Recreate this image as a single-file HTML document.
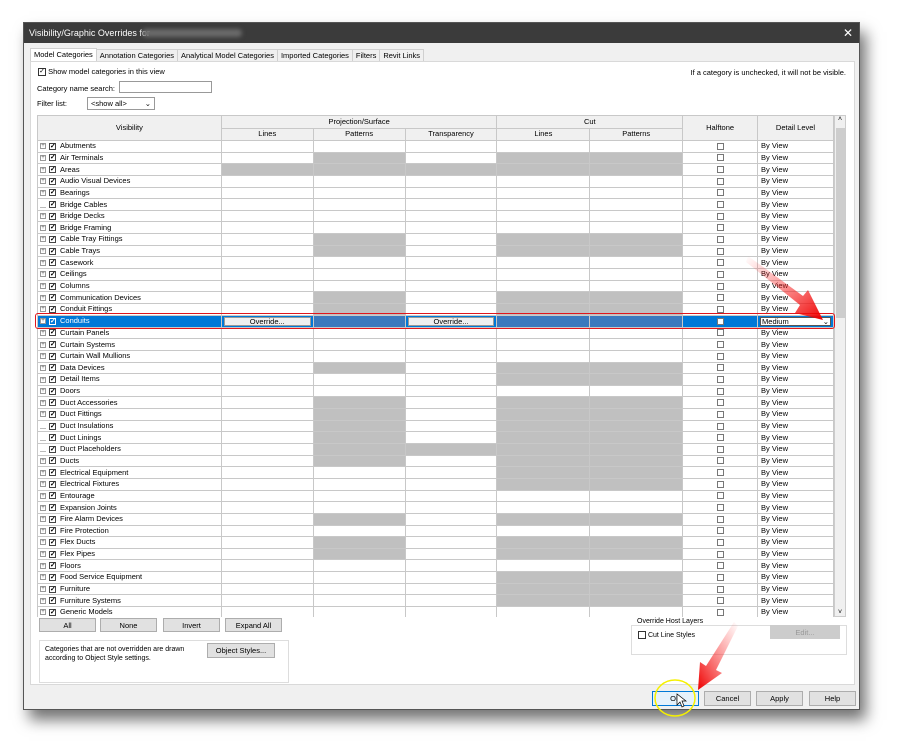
<!DOCTYPE html>
<html><head><meta charset="utf-8"><style>
*{box-sizing:border-box;margin:0;padding:0}
body{width:903px;height:754px;background:#fff;position:relative;overflow:hidden;font-family:"Liberation Sans",sans-serif;font-size:8px;color:#000}
.dlg{position:absolute;left:23px;top:22px;width:837px;height:688px;background:#f0f0f0;border:1px solid #555;box-shadow:6px 10px 14px rgba(0,0,0,.55)}
.title{position:absolute;left:0;top:0;width:100%;height:20px;background:#3b3b3b;color:#fff;font-size:9px;line-height:20px;padding-left:5px}
.blur{position:absolute;left:118px;top:6px;width:100px;height:8px;background:#6a6a6a;border-radius:4px;filter:blur(2px)}
.x{position:absolute;right:6px;top:0;color:#fff;font-size:12px;line-height:20px}
.abs{position:absolute}
.tabs{position:absolute;left:6px;top:26px;height:12px;display:flex}
.tab{border:1px solid #d0d0d0;border-bottom:none;padding:0 3px;font-size:7.5px;line-height:11px;background:#f0f0f0;margin-right:-1px}
.tab.on{background:#fff;height:13px;margin-top:-1px}
.panel{position:absolute;left:6px;top:38px;width:825px;height:624px;background:#fff;border:1px solid #d9d9d9}
.cb{display:inline-block;width:8px;height:8px;border:1px solid #333;background:#fff;vertical-align:middle;font-size:7px;line-height:6px;text-align:center}
.btn{position:absolute;background:#e1e1e1;border:1px solid #adadad;text-align:center;font-size:7.5px;line-height:13px}
table{border-collapse:collapse;table-layout:fixed;position:absolute;left:0;top:0}
td,th{border:1px solid #c8c8c8;height:11.65px;padding:0;font-weight:normal;font-size:7.5px;white-space:nowrap;overflow:hidden;line-height:10px}
th{background:#f0f0f0;text-align:center}
td.g{background:#c0c0c0}
td.v{padding-left:2px}
i.p{display:inline-block;width:6px;height:6px;border:1px solid #999;font-style:normal;font-size:6px;line-height:4px;text-align:center;color:#666;vertical-align:middle;margin-right:3px}
i.n{display:inline-block;width:6px;height:6px;margin-right:3px;border-bottom:1px solid #bbb;vertical-align:middle}
b.k{display:inline-block;width:7px;height:7px;border:1px solid #444;font-size:7px;line-height:5px;text-align:center;vertical-align:middle;margin-right:4px;font-weight:bold}
td.h{text-align:center}
s{display:inline-block;width:7px;height:7px;border:1px solid #777;vertical-align:middle;background:#fff}
td.d{padding-left:3px}
tr.sel td{background:#0078d7;color:#fff}
tr.sel td.db{background:#3a79bd}
.ov{display:block;margin:1px 2px;height:9px;background:#f0f0f0;border:1px solid #999;color:#000;text-align:center;line-height:7px}
</style></head><body>
<div class="dlg">
<div class="title">Visibility/Graphic Overrides for <span class="blur"></span><span class="x">✕</span></div>
<div class="tabs"><div class="tab on">Model Categories</div><div class="tab">Annotation Categories</div><div class="tab">Analytical Model Categories</div><div class="tab">Imported Categories</div><div class="tab">Filters</div><div class="tab">Revit Links</div></div>
<div class="panel">
<div class="abs" style="left:7px;top:5px;font-size:7.5px"><span class="cb">✓</span> Show model categories in this view</div>
<div class="abs" style="right:8px;top:6px;font-size:7.5px">If a category is unchecked, it will not be visible.</div>
<div class="abs" style="left:6px;top:22px;font-size:7.5px">Category name search:</div>
<div class="abs" style="left:88px;top:19px;width:93px;height:12px;border:1px solid #999;background:#fff"></div>
<div class="abs" style="left:6px;top:37px;font-size:7.5px">Filter list:</div>
<div class="abs" style="left:56px;top:35px;width:68px;height:13px;border:1px solid #999;background:#fff;font-size:7.5px;line-height:11px;padding-left:3px">&lt;show all&gt;<span style="position:absolute;right:3px">⌄</span></div>
<div class="abs" style="left:803px;top:53px;width:12px;height:502px;background:#f0f0f0;border:1px solid #ccc"><div style="position:absolute;left:1px;top:12px;width:9px;height:190px;background:#cdcdcd"></div><div style="position:absolute;top:0;width:100%;text-align:center;font-size:7px">˄</div><div style="position:absolute;bottom:0;width:100%;text-align:center;font-size:7px">˅</div></div>
<div class="abs" style="left:6px;top:53px;width:797px;height:502px;overflow:hidden">
<table>
<colgroup><col style="width:184px"><col style="width:92px"><col style="width:92px"><col style="width:92px"><col style="width:93px"><col style="width:93px"><col style="width:75px"><col style="width:76px"></colgroup>
<tr><th rowspan="2" style="height:25px">Visibility</th><th colspan="3">Projection/Surface</th><th colspan="2">Cut</th><th rowspan="2">Halftone</th><th rowspan="2">Detail Level</th></tr>
<tr><th>Lines</th><th>Patterns</th><th>Transparency</th><th>Lines</th><th>Patterns</th></tr>
<tr><td class="v"><i class="p">+</i><b class="k">✓</b>Abutments</td><td></td><td></td><td></td><td></td><td></td><td class="h"><s></s></td><td class="d">By View</td></tr>
<tr><td class="v"><i class="p">+</i><b class="k">✓</b>Air Terminals</td><td></td><td class="g"></td><td></td><td class="g"></td><td class="g"></td><td class="h"><s></s></td><td class="d">By View</td></tr>
<tr><td class="v"><i class="p">+</i><b class="k">✓</b>Areas</td><td class="g"></td><td class="g"></td><td class="g"></td><td class="g"></td><td class="g"></td><td class="h"><s></s></td><td class="d">By View</td></tr>
<tr><td class="v"><i class="p">+</i><b class="k">✓</b>Audio Visual Devices</td><td></td><td></td><td></td><td></td><td></td><td class="h"><s></s></td><td class="d">By View</td></tr>
<tr><td class="v"><i class="p">+</i><b class="k">✓</b>Bearings</td><td></td><td></td><td></td><td></td><td></td><td class="h"><s></s></td><td class="d">By View</td></tr>
<tr><td class="v"><i class="n"></i><b class="k">✓</b>Bridge Cables</td><td></td><td></td><td></td><td></td><td></td><td class="h"><s></s></td><td class="d">By View</td></tr>
<tr><td class="v"><i class="p">+</i><b class="k">✓</b>Bridge Decks</td><td></td><td></td><td></td><td></td><td></td><td class="h"><s></s></td><td class="d">By View</td></tr>
<tr><td class="v"><i class="p">+</i><b class="k">✓</b>Bridge Framing</td><td></td><td></td><td></td><td></td><td></td><td class="h"><s></s></td><td class="d">By View</td></tr>
<tr><td class="v"><i class="p">+</i><b class="k">✓</b>Cable Tray Fittings</td><td></td><td class="g"></td><td></td><td class="g"></td><td class="g"></td><td class="h"><s></s></td><td class="d">By View</td></tr>
<tr><td class="v"><i class="p">+</i><b class="k">✓</b>Cable Trays</td><td></td><td class="g"></td><td></td><td class="g"></td><td class="g"></td><td class="h"><s></s></td><td class="d">By View</td></tr>
<tr><td class="v"><i class="p">+</i><b class="k">✓</b>Casework</td><td></td><td></td><td></td><td></td><td></td><td class="h"><s></s></td><td class="d">By View</td></tr>
<tr><td class="v"><i class="p">+</i><b class="k">✓</b>Ceilings</td><td></td><td></td><td></td><td></td><td></td><td class="h"><s></s></td><td class="d">By View</td></tr>
<tr><td class="v"><i class="p">+</i><b class="k">✓</b>Columns</td><td></td><td></td><td></td><td></td><td></td><td class="h"><s></s></td><td class="d">By View</td></tr>
<tr><td class="v"><i class="p">+</i><b class="k">✓</b>Communication Devices</td><td></td><td class="g"></td><td></td><td class="g"></td><td class="g"></td><td class="h"><s></s></td><td class="d">By View</td></tr>
<tr><td class="v"><i class="p">+</i><b class="k">✓</b>Conduit Fittings</td><td></td><td class="g"></td><td></td><td class="g"></td><td class="g"></td><td class="h"><s></s></td><td class="d">By View</td></tr>
<tr class="sel"><td class="v"><i class="p" style="background:#fff">+</i><b class="k" style="border-color:#fff">✓</b>Conduits</td><td><span class="ov">Override...</span></td><td class="db"></td><td><span class="ov">Override...</span></td><td class="db"></td><td class="db"></td><td class="h"><s></s></td><td style="padding:1px 2px"><span style="display:block;background:#fff;color:#000;border:1px solid #555;height:9px;line-height:7px;padding-left:1px;position:relative">Medium<span style="position:absolute;right:1px;top:0">⌄</span></span></td></tr>
<tr><td class="v"><i class="p">+</i><b class="k">✓</b>Curtain Panels</td><td></td><td></td><td></td><td></td><td></td><td class="h"><s></s></td><td class="d">By View</td></tr>
<tr><td class="v"><i class="p">+</i><b class="k">✓</b>Curtain Systems</td><td></td><td></td><td></td><td></td><td></td><td class="h"><s></s></td><td class="d">By View</td></tr>
<tr><td class="v"><i class="p">+</i><b class="k">✓</b>Curtain Wall Mullions</td><td></td><td></td><td></td><td></td><td></td><td class="h"><s></s></td><td class="d">By View</td></tr>
<tr><td class="v"><i class="p">+</i><b class="k">✓</b>Data Devices</td><td></td><td class="g"></td><td></td><td class="g"></td><td class="g"></td><td class="h"><s></s></td><td class="d">By View</td></tr>
<tr><td class="v"><i class="p">+</i><b class="k">✓</b>Detail Items</td><td></td><td></td><td></td><td class="g"></td><td class="g"></td><td class="h"><s></s></td><td class="d">By View</td></tr>
<tr><td class="v"><i class="p">+</i><b class="k">✓</b>Doors</td><td></td><td></td><td></td><td></td><td></td><td class="h"><s></s></td><td class="d">By View</td></tr>
<tr><td class="v"><i class="p">+</i><b class="k">✓</b>Duct Accessories</td><td></td><td class="g"></td><td></td><td class="g"></td><td class="g"></td><td class="h"><s></s></td><td class="d">By View</td></tr>
<tr><td class="v"><i class="p">+</i><b class="k">✓</b>Duct Fittings</td><td></td><td class="g"></td><td></td><td class="g"></td><td class="g"></td><td class="h"><s></s></td><td class="d">By View</td></tr>
<tr><td class="v"><i class="n"></i><b class="k">✓</b>Duct Insulations</td><td></td><td class="g"></td><td></td><td class="g"></td><td class="g"></td><td class="h"><s></s></td><td class="d">By View</td></tr>
<tr><td class="v"><i class="n"></i><b class="k">✓</b>Duct Linings</td><td></td><td class="g"></td><td></td><td class="g"></td><td class="g"></td><td class="h"><s></s></td><td class="d">By View</td></tr>
<tr><td class="v"><i class="n"></i><b class="k">✓</b>Duct Placeholders</td><td></td><td class="g"></td><td class="g"></td><td class="g"></td><td class="g"></td><td class="h"><s></s></td><td class="d">By View</td></tr>
<tr><td class="v"><i class="p">+</i><b class="k">✓</b>Ducts</td><td></td><td class="g"></td><td></td><td class="g"></td><td class="g"></td><td class="h"><s></s></td><td class="d">By View</td></tr>
<tr><td class="v"><i class="p">+</i><b class="k">✓</b>Electrical Equipment</td><td></td><td></td><td></td><td class="g"></td><td class="g"></td><td class="h"><s></s></td><td class="d">By View</td></tr>
<tr><td class="v"><i class="p">+</i><b class="k">✓</b>Electrical Fixtures</td><td></td><td></td><td></td><td class="g"></td><td class="g"></td><td class="h"><s></s></td><td class="d">By View</td></tr>
<tr><td class="v"><i class="p">+</i><b class="k">✓</b>Entourage</td><td></td><td></td><td></td><td></td><td></td><td class="h"><s></s></td><td class="d">By View</td></tr>
<tr><td class="v"><i class="p">+</i><b class="k">✓</b>Expansion Joints</td><td></td><td></td><td></td><td></td><td></td><td class="h"><s></s></td><td class="d">By View</td></tr>
<tr><td class="v"><i class="p">+</i><b class="k">✓</b>Fire Alarm Devices</td><td></td><td class="g"></td><td></td><td class="g"></td><td class="g"></td><td class="h"><s></s></td><td class="d">By View</td></tr>
<tr><td class="v"><i class="p">+</i><b class="k">✓</b>Fire Protection</td><td></td><td></td><td></td><td></td><td></td><td class="h"><s></s></td><td class="d">By View</td></tr>
<tr><td class="v"><i class="p">+</i><b class="k">✓</b>Flex Ducts</td><td></td><td class="g"></td><td></td><td class="g"></td><td class="g"></td><td class="h"><s></s></td><td class="d">By View</td></tr>
<tr><td class="v"><i class="p">+</i><b class="k">✓</b>Flex Pipes</td><td></td><td class="g"></td><td></td><td class="g"></td><td class="g"></td><td class="h"><s></s></td><td class="d">By View</td></tr>
<tr><td class="v"><i class="p">+</i><b class="k">✓</b>Floors</td><td></td><td></td><td></td><td></td><td></td><td class="h"><s></s></td><td class="d">By View</td></tr>
<tr><td class="v"><i class="p">+</i><b class="k">✓</b>Food Service Equipment</td><td></td><td></td><td></td><td class="g"></td><td class="g"></td><td class="h"><s></s></td><td class="d">By View</td></tr>
<tr><td class="v"><i class="p">+</i><b class="k">✓</b>Furniture</td><td></td><td></td><td></td><td class="g"></td><td class="g"></td><td class="h"><s></s></td><td class="d">By View</td></tr>
<tr><td class="v"><i class="p">+</i><b class="k">✓</b>Furniture Systems</td><td></td><td></td><td></td><td class="g"></td><td class="g"></td><td class="h"><s></s></td><td class="d">By View</td></tr>
<tr><td class="v"><i class="p">+</i><b class="k">✓</b>Generic Models</td><td></td><td></td><td></td><td></td><td></td><td class="h"><s></s></td><td class="d">By View</td></tr>
</table>
</div>
<div class="btn" style="left:8px;top:556px;width:57px;height:14px">All</div>
<div class="btn" style="left:69px;top:556px;width:57px;height:14px">None</div>
<div class="btn" style="left:132px;top:556px;width:57px;height:14px">Invert</div>
<div class="btn" style="left:194px;top:556px;width:57px;height:14px">Expand All</div>
<div class="abs" style="left:8px;top:578px;width:250px;height:43px;border:1px solid #ddd"></div>
<div class="abs" style="left:14px;top:583px;font-size:7px;line-height:9px">Categories that are not overridden are drawn<br>according to Object Style settings.</div>
<div class="btn" style="left:176px;top:581px;width:68px;height:15px">Object Styles...</div>
<div class="abs" style="left:600px;top:563px;width:216px;height:30px;border:1px solid #ddd"></div>
<div class="abs" style="left:605px;top:556px;font-size:7px;background:#fff;padding:0 1px">Override Host Layers</div>
<div class="abs" style="left:607px;top:569px;font-size:7px"><span class="cb"></span> Cut Line Styles</div>
<div class="btn" style="left:739px;top:563px;width:70px;height:14px;color:#999;background:#ccc;border-color:#ccc">Edit...</div>
</div>
<div class="btn" style="left:628px;top:668px;width:47px;height:15px;border:1px solid #0078d7;background:#e5f1fb">OK</div>
<div class="btn" style="left:680px;top:668px;width:47px;height:15px">Cancel</div>
<div class="btn" style="left:732px;top:668px;width:47px;height:15px">Apply</div>
<div class="btn" style="left:785px;top:668px;width:47px;height:15px">Help</div>
</div>
<div class="abs" style="left:35px;top:313px;width:800px;height:16px;border:1.5px solid #e0161c;border-radius:3px"></div>
<svg class="abs" style="left:0;top:0" width="903" height="754">
<defs><linearGradient id="a1" x1="0" y1="0" x2="1" y2="1"><stop offset="0" stop-color="#ff4040" stop-opacity="0"/><stop offset="1" stop-color="#e00" stop-opacity="1"/></linearGradient>
<linearGradient id="a2" x1="1" y1="0" x2="0" y2="1"><stop offset="0" stop-color="#ff4040" stop-opacity="0"/><stop offset="1" stop-color="#e00" stop-opacity="1"/></linearGradient></defs>
<polygon points="748,256 803,296 808,290 823,320 795,313 800,305 746,262" fill="url(#a1)"/>
<polygon points="738,626 716,670 722,673 698,690 700,662 706,666 734,622" fill="url(#a2)"/>
<ellipse cx="675" cy="698" rx="20" ry="18" fill="none" stroke="#f5f000" stroke-width="1.5"/>
<path d="M677 694 L677 705 L680 702 L682 707 L684 706 L682 701 L686 701 Z" fill="#fff" stroke="#000" stroke-width=".7"/>
</svg>
</body></html>
